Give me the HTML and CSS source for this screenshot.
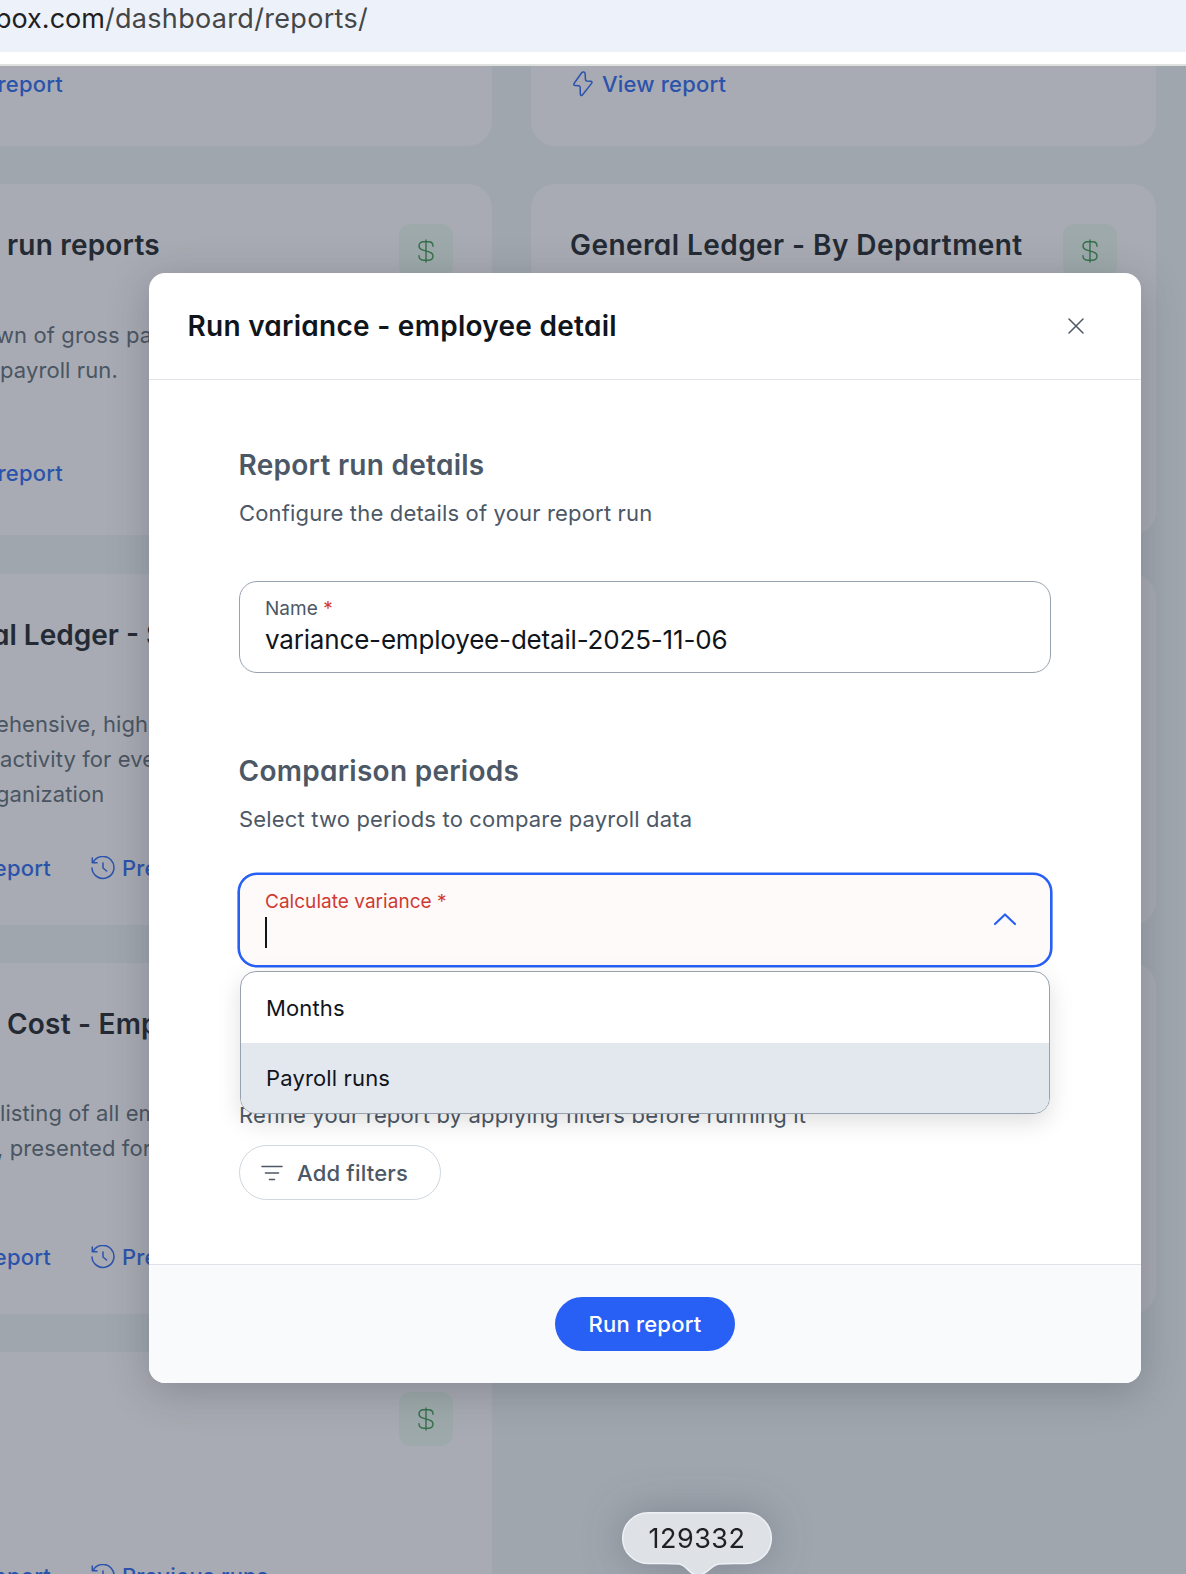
FILE: index.html
```
<!DOCTYPE html>
<html lang="en">
<head>
<meta charset="utf-8">
<title>Reports</title>
<link rel="stylesheet" href="styles.css">
</head>
<body>
<svg class="defs" width="0" height="0">
  <symbol id="bolt" viewBox="0 0 20 26"><path d="M8.700 1.700 1.200 12.300c-.8 1.200-.4 2.200 1 2.300l3.600.2c1 .1 1.400.5 1.400 1.500l.1 6.700c.1 1.600 1.300 2.100 2.300.8l9-11.400c.8-1.100.4-2-.9-2.100l-3.800-.2c-.9-.1-1.300-.5-1.400-1.400l-.4-6.200c-.1-1.600-2.300-2.200-3.400-.8Z" fill="none" stroke="currentColor" stroke-width="1.500" stroke-linejoin="round"/></symbol>
  <symbol id="history" viewBox="0 0 24 24"><path d="M1.300 2v4.700h4.700M2.200 6.400A11 11 0 1 1 1 12M12 7v5l3.600 3" fill="none" stroke="currentColor" stroke-width="1.500" stroke-linecap="round" stroke-linejoin="round"/></symbol>
  <symbol id="dollar" viewBox="0 0 16 24"><path d="M8 1v22M15 7.300V7c0-2.600-1.700-4.200-4.300-4.200H5.300C2.700 2.800 1 4.400 1 6.800c0 2.200 1.200 3.500 3.300 4.100l7.400 2.200c2.100.6 3.300 1.900 3.300 4 0 2.500-1.700 4.100-4.300 4.100H5.300C2.700 21.200 1 19.600 1 17v-.4" fill="none" stroke="currentColor" stroke-width="1.400" stroke-linecap="round"/></symbol>
</svg>
<header class="urlbar"><span class="host">box.com</span><span class="path">/dashboard/reports/</span></header>
<main class="page">
  <div class="grid">
    <section class="card first left"><div class="links"><a class="end-a">report</a></div></section>
    <section class="card first"><div class="links"><a><svg class="bolt"><use href="#bolt"/></svg><span>View report</span></a></div></section>

    <section class="card left">
      <div class="head"><h3>run reports</h3><span class="badge"><svg><use href="#dollar"/></svg></span></div>
      <p><span class="pull-a">wn of gross pay by</span><br><span>payroll run.</span></p>
      <div class="links"><a class="end-a">report</a></div>
    </section>
    <section class="card">
      <div class="head"><h3>General Ledger - By Department</h3><span class="badge"><svg><use href="#dollar"/></svg></span></div>
    </section>

    <section class="card left low">
      <div class="head"><h3 class="pull-b">al Ledger - Summary</h3></div>
      <p><span class="pull-a">ehensive, high-level</span><br><span>activity for every</span><br><span class="pull-a">ganization</span></p>
      <div class="links"><a class="end-b">eport</a><a class="prev"><svg class="history"><use href="#history"/></svg><span>Previous runs</span></a></div>
    </section>
    <section class="card"></section>

    <section class="card left low">
      <div class="head"><h3>Cost - Employee</h3></div>
      <p class="cost"><span>listing of all employees</span><br><span class="pull-c">, presented for</span></p>
      <div class="links"><a class="end-b">eport</a><a class="prev"><svg class="history"><use href="#history"/></svg><span>Previous runs</span></a></div>
    </section>
    <section class="card"></section>

    <section class="card left last">
      <div class="head"><h3></h3><span class="badge"><svg><use href="#dollar"/></svg></span></div>
      <div class="links"><a class="end-b">eport</a><a class="prev"><svg class="history"><use href="#history"/></svg><span>Previous runs</span></a></div>
    </section>
  </div>
</main>

<div class="modal" role="dialog">
  <div class="modal-head">
    <h1>Run variance - employee detail</h1>
    <svg class="close" viewBox="0 0 16 16"><path d="M1 1l14 14M15 1 1 15" fill="none" stroke="currentColor" stroke-width="1.500" stroke-linecap="round"/></svg>
  </div>
  <div class="modal-body">
    <h2>Report run details</h2>
    <p class="sub s1">Configure the details of your report run</p>
    <div class="field">
      <label>Name <b>*</b></label>
      <div class="value">variance-employee-detail-2025-11-06</div>
    </div>
    <h2 class="cmp">Comparison periods</h2>
    <p class="sub s2">Select two periods to compare payroll data</p>
    <div class="select">
      <label>Calculate variance *</label>
      <i class="caret"></i>
      <svg class="chev" viewBox="0 0 24 14"><path d="M2 12 12 2.500 22 12" fill="none" stroke="currentColor" stroke-width="2.200" stroke-linecap="round" stroke-linejoin="round"/></svg>
      <ul class="menu"><li>Months</li><li class="on">Payroll runs</li></ul>
    </div>
    <p class="sub s3">Refine your report by applying filters before running it</p>
    <button class="filter"><svg viewBox="0 0 22 16"><path d="M1 1.500h20M4.500 8h13M8.500 14.500h5" fill="none" stroke="currentColor" stroke-width="1.600" stroke-linecap="round"/></svg><span>Add filters</span></button>
  </div>
  <div class="modal-foot"><button class="run">Run report</button></div>
</div>

<div class="bubble">
  <svg viewBox="0 0 152 64"><path d="M27 .8H125A25 25 0 0 1 125 51.500C115 51.500 108 51 98 52C90 53 86 63 77 63S66 53 58 52C48 51 40 51.500 27 51.500A25 25 0 0 1 27 .8Z" fill="#dee1e6" stroke="#edf1f5" stroke-width="1.500"/></svg>
  <span>129332</span>
</div>
</body>
</html>
```
FILE: styles.css
```
* { box-sizing: border-box; margin: 0; padding: 0; }
html, body { height: 1574px; overflow: hidden; }
body { position: relative; width: 1186px; background: #9fa6ae; font-family: Inter, "Liberation Sans", sans-serif; font-size: 22px; color: #4c5866; }
.defs { position: absolute; }
h1, h2, h3 { font-size: 28px; line-height: 36px; font-weight: 600; letter-spacing: .27px; font-feature-settings: "cv11"; white-space: nowrap; }
.urlbar { height: 66px; padding-top: 1px; background: linear-gradient(#edf2fa 52px, #fff 52px, #fff 64px, #dfe1df 64px); font-size: 27px; line-height: 36px; white-space: nowrap; }
.host { color: #1f2023; margin-left: -5px; }
.path { color: #444648; letter-spacing: .32px; }

.page { height: 1508px; overflow: hidden; }
.grid { display: grid; grid-template-columns: 492px 625px; column-gap: 39px; row-gap: 38.500px; grid-template-rows: 79.500px 351.250px 350.750px 350.500px 351px; }
.card { display: flex; flex-direction: column; background: #a8abb3; border-radius: 24px; padding: 40px 39px 48px 40px; }
.card.first { border-top-left-radius: 0; border-top-right-radius: 0; padding-top: 0; padding-bottom: 47.500px; }
.card.left { border-top-left-radius: 0; border-bottom-left-radius: 0; padding-left: 0; }
.card.low { padding-bottom: 43px; }
.head { display: flex; justify-content: space-between; height: 54px; }
.head h3 { padding-top: 3px; color: #242a34; letter-spacing: .43px; margin-left: -1px; }
.left .head h3 { padding-left: 8px; letter-spacing: .2px; }
.left .head h3.pull-b { padding-left: 0; margin-left: -8px; letter-spacing: 0; }
.badge { display: flex; align-items: center; justify-content: center; width: 54px; height: 54px; border-radius: 12px; background: #9da9aa; color: #35704a; }
.badge svg { width: 16px; height: 24px; }
.card p { margin-top: 39.500px; line-height: 35px; letter-spacing: .1px; color: #4a5562; white-space: nowrap; }
.card p.cost { margin-top: 38.500px; }
.pull-a { margin-left: -4px; }
.pull-c { margin-left: -3px; }
.links { display: flex; margin-top: auto; height: 28px; align-items: center; line-height: 28px; font-weight: 500; letter-spacing: .2px; color: #2c53ab; white-space: nowrap; }
.links a { display: flex; align-items: center; }
.end-a { width: 63px; justify-content: flex-end; }
.end-b { width: 51px; justify-content: flex-end; }
.prev { margin-left: 40px; gap: 7px; }
.bolt { width: 20px; height: 26px; margin: 0 9px 0 2px; }
.history { width: 24px; height: 24px; overflow: visible; }
.last .links { margin-top: 116px; }

.modal { position: absolute; left: 149px; top: 273px; width: 992px; height: 1110px; display: flex; flex-direction: column; background: #fff; border-radius: 16px; box-shadow: 0 8px 40px rgba(40, 40, 50, .25); }
.modal-head { display: flex; align-items: center; justify-content: space-between; height: 107px; padding: 0 57px 0 38.500px; border-bottom: 1px solid #e1e4e8; color: #10151c; }
.close { width: 16px; height: 16px; color: #4c5866; }
.modal-body { flex: 1; padding: 67px 90px 0; }
h2 { color: #4c5866; margin-left: -.5px; }
.sub { line-height: 30px; letter-spacing: .17px; white-space: nowrap; }
.s1 { margin-top: 15px; }
.field { height: 92px; margin-top: 53px; border: 1px solid #98a2af; border-radius: 18px; padding: 15px 25px; }
label { display: block; font-size: 19px; line-height: 24px; letter-spacing: .03px; }
label b { font-weight: 400; color: #cf3b34; }
.value { margin-top: 2px; font-size: 26px; line-height: 34px; letter-spacing: -.18px; color: #10151c; white-space: nowrap; }
.cmp { margin-top: 80px; }
.s2 { margin-top: 15px; }
.select { position: relative; height: 94px; margin: 38.500px -1px 0; border: 2px solid #2860f6; box-shadow: 0 0 0 .6px #2860f6; border-radius: 19px; background: #fefaf9; padding: 15.500px 25px; }
.select label { color: #cf3b34; }
.caret { display: block; width: 2px; height: 31px; margin-top: 3px; background: #10151c; }
.chev { position: absolute; right: 33px; top: 37.500px; width: 24px; height: 14px; color: #2860f6; }
.menu { position: absolute; left: 0; right: 0; top: 96.500px; height: 143px; overflow: hidden; list-style: none; background: #fff; border: 1px solid #98a2af; border-radius: 16px; color: #10151c; box-shadow: 0 8px 24px rgba(0, 0, 0, .13); z-index: 2; }
.menu li { height: 71px; line-height: 72px; padding-left: 25px; letter-spacing: .15px; }
.menu .on { background: #e3e7ee; line-height: 70px; }
.s3 { margin-top: 133.500px; }
button { font: inherit; border: 0; letter-spacing: .2px; }
.filter { display: flex; align-items: center; gap: 14px; width: 202px; height: 55px; margin-top: 15px; padding-left: 21px; border: 1px solid #cfd6df; border-radius: 28px; background: none; color: #4c5866; font-weight: 500; white-space: nowrap; }
.filter svg { width: 22px; height: 16px; }
.modal-foot { display: flex; align-items: center; justify-content: center; height: 119px; border-top: 1px solid #dfe3e9; background: #f9fafc; border-radius: 0 0 16px 16px; }
.run { width: 180px; height: 54px; border-radius: 27px; background: #2860f6; color: #fff; font-weight: 500; white-space: nowrap; }

.bubble { position: absolute; left: 621px; top: 1512px; width: 152px; height: 62px; filter: drop-shadow(0 0 20px rgba(60, 60, 75, .3)); color: #1f2023; font-size: 27px; letter-spacing: .5px; line-height: 54px; text-align: center; }
.bubble svg { position: absolute; left: 0; top: 0; width: 152px; height: 64px; }
.bubble span { position: relative; }
```
